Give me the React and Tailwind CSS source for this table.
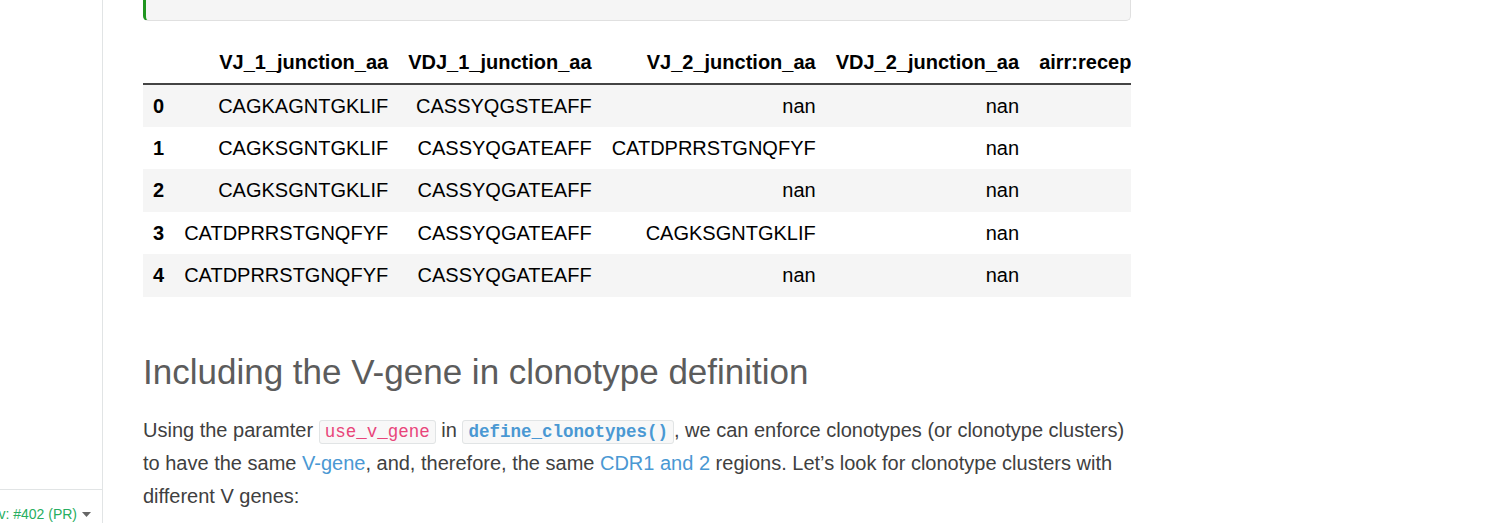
import React from 'react'

const rows = [
  ['0', 'CAGKAGNTGKLIF', 'CASSYQGSTEAFF', 'nan', 'nan'],
  ['1', 'CAGKSGNTGKLIF', 'CASSYQGATEAFF', 'CATDPRRSTGNQFYF', 'nan'],
  ['2', 'CAGKSGNTGKLIF', 'CASSYQGATEAFF', 'nan', 'nan'],
  ['3', 'CATDPRRSTGNQFYF', 'CASSYQGATEAFF', 'CAGKSGNTGKLIF', 'nan'],
  ['4', 'CATDPRRSTGNQFYF', 'CASSYQGATEAFF', 'nan', 'nan'],
]

const headers = ['VJ_1_junction_aa', 'VDJ_1_junction_aa', 'VJ_2_junction_aa', 'VDJ_2_junction_aa', 'airr:receptor_type']

export default function App() {
  return (
    <div className="flex h-[523px] overflow-hidden bg-white font-['Liberation_Sans',Arial,sans-serif]">
      {/* sidebar */}
      <aside className="w-[103px] shrink-0 border-r border-[#e1e4e5] flex flex-col justify-end">
        <div className="h-[34px] border-t border-[#e1e4e5] pt-[14px] pr-[11px] overflow-hidden">
          <div className="flex items-center justify-end whitespace-nowrap h-[20px]">
            <span className="text-[14px] leading-[20px] text-[#27ae60]">v: #402 (PR)</span>
            <svg width="9" height="5" viewBox="0 0 9 5" className="ml-[5px] shrink-0">
              <path d="M0 0 L9 0 L4.5 5 Z" fill="#666" />
            </svg>
          </div>
        </div>
      </aside>

      {/* content */}
      <main className="flex-1 pl-[40px] overflow-hidden">
        <div className="w-[988px]">
          {/* end of code cell */}
          <div className="h-[21px] bg-[#f5f5f5] border border-t-0 border-[#e0e0e0] border-l-[3px] border-l-[#1f951f] rounded-b-[5px]"></div>

          {/* dataframe */}
          <div className="mt-[20px] overflow-hidden">
            <table className="border-collapse text-[20px] text-black whitespace-nowrap">
              <thead>
                <tr className="h-[43px] border-b-2 border-[#444]">
                  <th className="px-[10px]"></th>
                  {headers.map((h) => (
                    <th key={h} className="px-[10px] pb-[1px] text-right font-bold">{h}</th>
                  ))}
                </tr>
              </thead>
              <tbody>
                {rows.map((r, i) => (
                  <tr key={r[0]} className={i % 2 === 0 ? 'h-[42.5px] bg-[#f5f5f5]' : 'h-[42.5px] bg-white'}>
                    <th className="px-[10px] text-left font-bold">{r[0]}</th>
                    {r.slice(1).map((v, j) => (
                      <td key={j} className="px-[10px] text-right">{v}</td>
                    ))}
                    <td className="px-[10px] text-right">TCR</td>
                  </tr>
                ))}
              </tbody>
            </table>
          </div>

          <h2 className="mt-[54px] text-[35px] leading-[42px] text-[#5c5c5c] font-normal">
            Including the V-gene in clonotype definition
          </h2>

          <p className="mt-[21px] text-[20px] leading-[33px] text-[#404040]">
            Using the paramter{' '}
            <code className="font-['Liberation_Mono',monospace] text-[17.5px] leading-[20px] text-[#e8457a] bg-[#f8f8f8] border border-[#e1e4e5] rounded-[3px] px-[5px] py-[1px]">use_v_gene</code>
            {' '}in{' '}
            <code className="font-['Liberation_Mono',monospace] text-[17.5px] leading-[20px] font-bold text-[#4a98d3] bg-[#f8f8f8] border border-[#e1e4e5] rounded-[3px] px-[5px] py-[1px]">define_clonotypes()</code>
            , we can enforce clonotypes (or clonotype clusters) to have the same{' '}
            <a className="text-[#4a98d3]">V-gene</a>, and, therefore, the same{' '}
            <a className="text-[#4a98d3]">CDR1 and 2</a> regions. Let’s look for clonotype clusters with different V genes:
          </p>
        </div>
      </main>
    </div>
  )
}
